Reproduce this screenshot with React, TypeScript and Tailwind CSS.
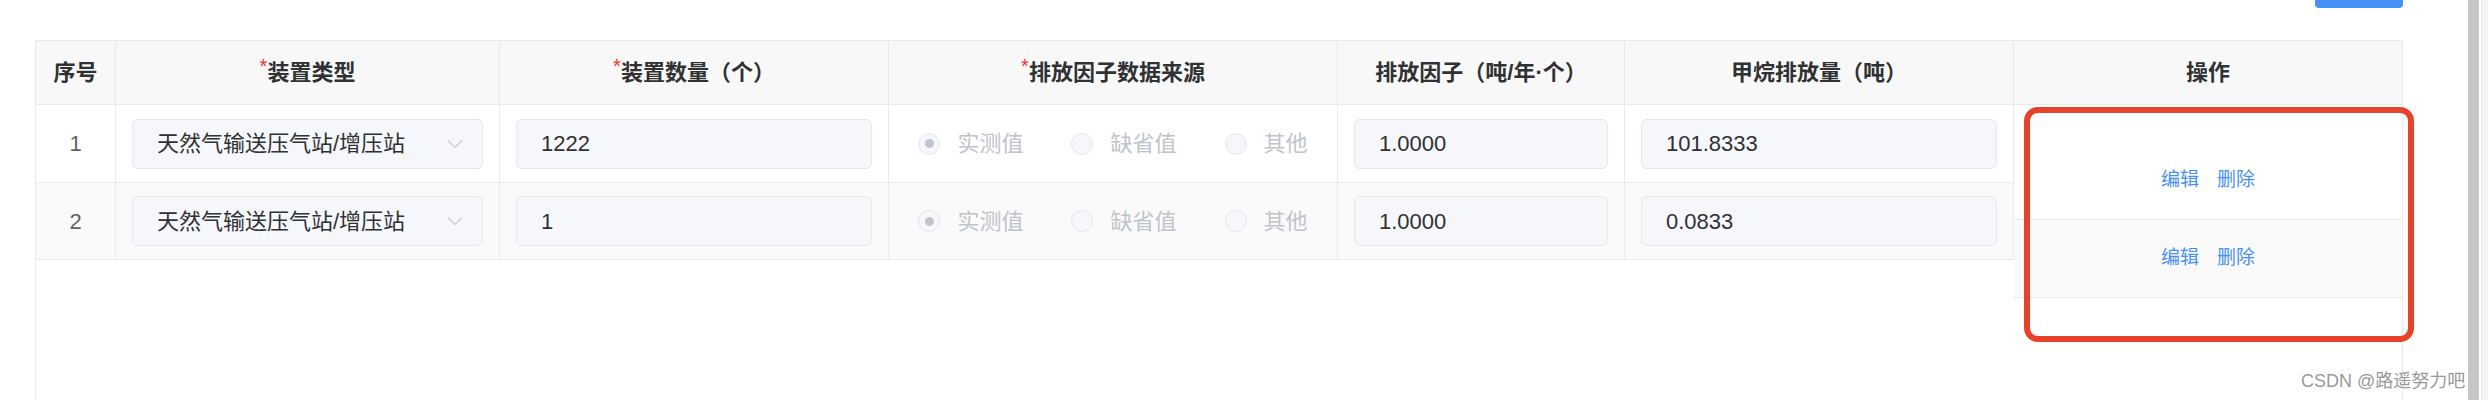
import React from "react";

const rows = [
  { id: 1, type: "天然气输送压气站/增压站", count: "1222", factor: "1.0000", amount: "101.8333", h: "h-[78px]", bg: "bg-white" },
  { id: 2, type: "天然气输送压气站/增压站", count: "1", factor: "1.0000", amount: "0.0833", h: "h-[77px]", bg: "bg-[#fafafa]" },
];

const cols = "grid grid-cols-[80px_384px_389px_449px_287px_389px]";

function Required({ children }: { children: React.ReactNode }) {
  return (
    <span>
      <span className="text-[#f5312b] font-normal align-top text-[20px] leading-none">*</span>
      {children}
    </span>
  );
}

function Radio({ label, checked }: { label: string; checked?: boolean }) {
  return (
    <div className="flex items-center gap-[17px]">
      <span className="flex h-[22px] w-[22px] items-center justify-center rounded-full border border-[#e4e7ed] bg-[#f5f7fa]">
        {checked && <span className="h-[9px] w-[9px] rounded-full bg-[#c0c4cc]" />}
      </span>
      <span className="text-[#c0c4cc]">{label}</span>
    </div>
  );
}

function Field({ children }: { children: React.ReactNode }) {
  return (
    <div className="flex h-[50px] w-full items-center rounded-[6px] border border-[#e4e7ed] bg-[#f5f7fa] pl-[24px] text-[#303133]">
      {children}
    </div>
  );
}

export default function App() {
  return (
    <div
      className="relative flex h-[400px] w-[2488px] overflow-hidden bg-white text-[22px]"
      style={{ fontFamily: '"Liberation Sans", "Noto Sans CJK SC", sans-serif' }}
    >
      <div className="w-[2468px] shrink-0">
        <div className="flex w-[2403px] justify-end">
          <div className="h-[8px] w-[88px] rounded-b-[4px] bg-[#4790f6]" />
        </div>

        <div className="ml-[35px] mt-[32px] h-[400px] w-[2368px] border-x border-t border-[#e8eaef]">
          {/* header */}
          <div className="grid h-[64px] grid-cols-[80px_384px_389px_449px_287px_389px_388px] border-b border-[#e8eaef] bg-[#f8f8f9] font-bold text-[#303133]">
            <div className="flex items-center justify-center border-r border-[#e8eaef]">序号</div>
            <div className="flex items-center justify-center border-r border-[#e8eaef]">
              <Required>装置类型</Required>
            </div>
            <div className="flex items-center justify-center border-r border-[#e8eaef]">
              <Required>装置数量（个）</Required>
            </div>
            <div className="flex items-center justify-center border-r border-[#e8eaef]">
              <Required>排放因子数据来源</Required>
            </div>
            <div className="flex items-center justify-center border-r border-[#e8eaef]">排放因子（吨/年·个）</div>
            <div className="flex items-center justify-center border-r border-[#e8eaef]">甲烷排放量（吨）</div>
            <div className="flex items-center justify-center">操作</div>
          </div>

          {/* body */}
          <div className="flex">
            <div className="w-[1978px]">
              {rows.map((r) => (
                <div key={r.id} className={`${cols} ${r.h} ${r.bg} border-b border-[#e8eaef]`}>
                  <div className="flex items-center justify-center border-r border-[#e8eaef] text-[#606266]">{r.id}</div>
                  <div className="flex items-center border-r border-[#e8eaef] px-[16px]">
                    <div className="flex h-[50px] w-full items-center justify-between rounded-[6px] border border-[#e4e7ed] bg-[#f5f7fa] pl-[24px] pr-[19px] text-[#303133]">
                      <span>{r.type}</span>
                      <svg width="16" height="10" viewBox="0 0 16 10" fill="none">
                        <polyline points="1,1.5 8,8.5 15,1.5" stroke="#c8ccd4" strokeWidth="1.2" />
                      </svg>
                    </div>
                  </div>
                  <div className="flex items-center border-r border-[#e8eaef] px-[16px]">
                    <Field>{r.count}</Field>
                  </div>
                  <div className="flex items-center justify-center gap-[48px] border-r border-[#e8eaef]">
                    <Radio label="实测值" checked />
                    <Radio label="缺省值" />
                    <Radio label="其他" />
                  </div>
                  <div className="flex items-center border-r border-[#e8eaef] px-[16px]">
                    <Field>{r.factor}</Field>
                  </div>
                  <div className="flex items-center border-r border-[#e8eaef] px-[16px]">
                    <Field>{r.amount}</Field>
                  </div>
                </div>
              ))}
            </div>

            {/* fixed action column */}
            <div className="w-[388px] text-[19px] text-[#4790f6]">
              <div className="h-[115px] border-b border-[#e8eaef] bg-white pt-[37px]">
                <div className="flex h-full items-center justify-center gap-[18px]">
                  <span>编辑</span>
                  <span>删除</span>
                </div>
              </div>
              <div className="flex h-[78px] items-center justify-center gap-[18px] border-b border-[#e8eaef] bg-[#fafafa]">
                <span>编辑</span>
                <span>删除</span>
              </div>
            </div>
          </div>
        </div>
      </div>

      {/* page scrollbar */}
      <div className="h-full w-[11px] shrink-0 bg-[#c6c6c6]" />
      <div className="h-full w-[2px] shrink-0 bg-white" />
      <div className="h-full flex-1 border-l border-[#e6e6e6] bg-[#f4f4f4]" />

      {/* annotation */}
      <div className="absolute left-[2024px] top-[107px] h-[235px] w-[390px] rounded-[14px] border-[6px] border-[#e8432a]" />

      <div className="absolute left-[2301px] top-[368px] text-[18px] text-[#9a9a9a] [text-shadow:0_0_1px_#fff]">
        CSDN @路遥努力吧
      </div>
    </div>
  );
}
